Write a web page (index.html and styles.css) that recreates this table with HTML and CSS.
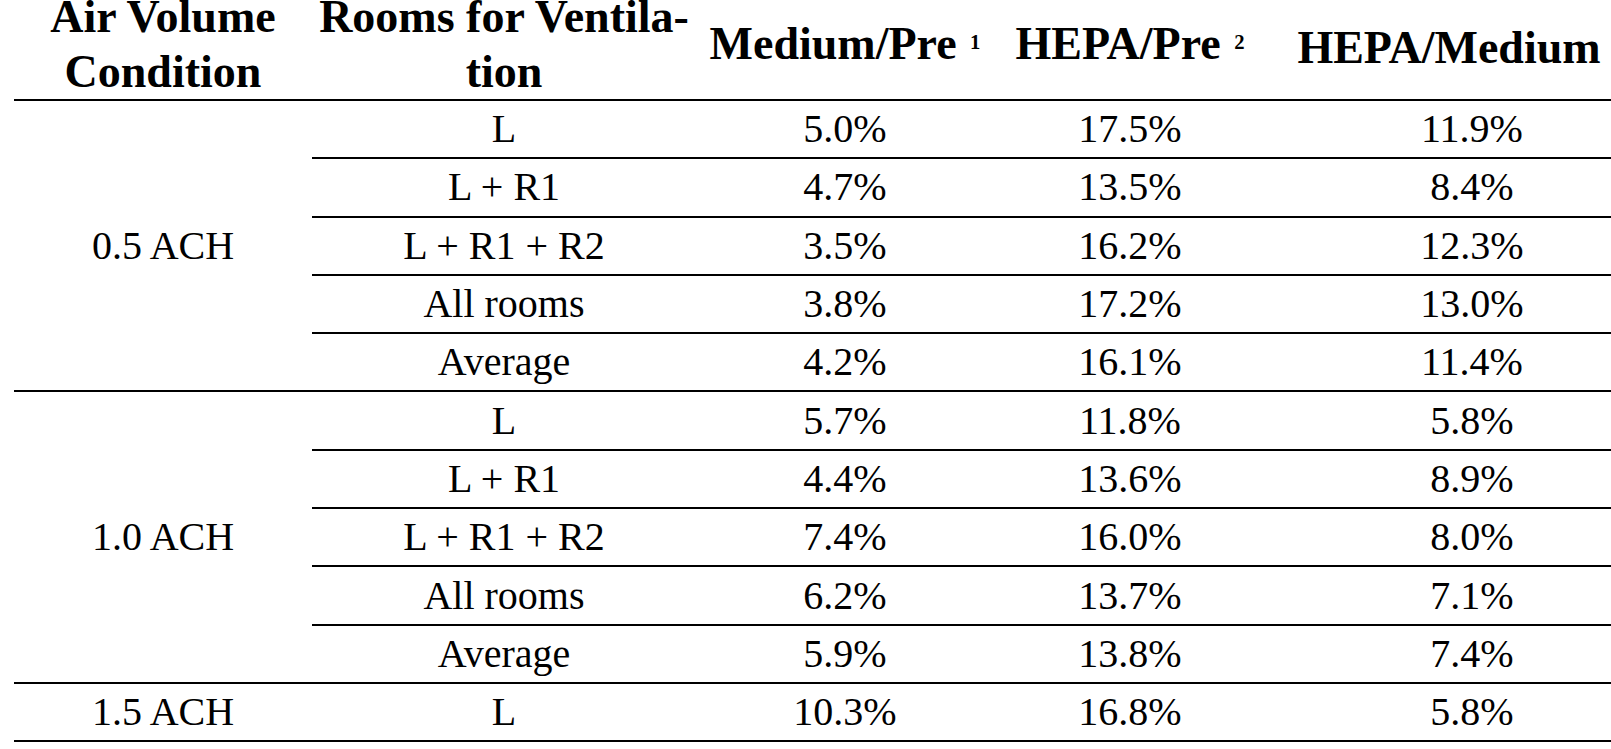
FILE: index.html
```html
<!DOCTYPE html>
<html lang="en">
<head>
<meta charset="utf-8">
<title>Air volume ratios</title>
<link rel="stylesheet" href="styles.css">
</head>
<body>
<table class="data">
  <colgroup>
    <col class="c1"><col class="c2"><col class="c3"><col class="c4"><col class="c5">
  </colgroup>
  <thead>
    <tr>
      <th>Air Volume<br>Condition</th>
      <th>Rooms for Ventila-<br>tion</th>
      <th class="single">Medium/Pre <sup>1</sup></th>
      <th class="single">HEPA/Pre <sup>2</sup></th>
      <th class="single last">HEPA/Medium</th>
    </tr>
  </thead>
  <tbody>
    <tr><td rowspan="5" class="group">0.5 ACH</td><td>L</td><td>5.0%</td><td>17.5%</td><td>11.9%</td></tr>
    <tr><td>L + R1</td><td>4.7%</td><td>13.5%</td><td>8.4%</td></tr>
    <tr><td>L + R1 + R2</td><td>3.5%</td><td>16.2%</td><td>12.3%</td></tr>
    <tr><td>All rooms</td><td>3.8%</td><td>17.2%</td><td>13.0%</td></tr>
    <tr><td>Average</td><td>4.2%</td><td>16.1%</td><td>11.4%</td></tr>
    <tr><td rowspan="5" class="group">1.0 ACH</td><td>L</td><td>5.7%</td><td>11.8%</td><td>5.8%</td></tr>
    <tr><td>L + R1</td><td>4.4%</td><td>13.6%</td><td>8.9%</td></tr>
    <tr><td>L + R1 + R2</td><td>7.4%</td><td>16.0%</td><td>8.0%</td></tr>
    <tr><td>All rooms</td><td>6.2%</td><td>13.7%</td><td>7.1%</td></tr>
    <tr><td>Average</td><td>5.9%</td><td>13.8%</td><td>7.4%</td></tr>
    <tr><td class="group">1.5 ACH</td><td>L</td><td>10.3%</td><td>16.8%</td><td>5.8%</td></tr>
  </tbody>
</table>
</body>
</html>
```
FILE: styles.css
```css
html, body {
  margin: 0;
  padding: 0;
  background: #ffffff;
  overflow: hidden;
}

.data {
  border-collapse: collapse;
  margin-top: -13px;
  margin-left: 14px;
  width: 1664px;
  table-layout: fixed;
  font-family: "Liberation Serif", "Times New Roman", serif;
  color: #000000;
}

.c1 { width: 298px; }
.c2 { width: 384px; }
.c3 { width: 298px; }
.c4 { width: 272px; }
.c5 { width: 412px; }

.data th {
  font-size: 46px;
  font-weight: bold;
  line-height: 54.5px;
  padding: 3px 0 0 0;
  text-align: center;
  vertical-align: middle;
  border-bottom: 2px solid #000000;
  white-space: nowrap;
}

.data th.single {
  padding-top: 10px;
}

.data th.last {
  padding-right: 46px;
}

.data sup {
  font-size: 0.45em;
  vertical-align: 0;
  position: relative;
  top: -0.45em;
  margin-left: 2px;
  font-weight: bold;
}

.data td {
  font-size: 40px;
  line-height: 56px;
  height: 56.3px;
  padding: 0;
  text-align: center;
  vertical-align: middle;
  border-bottom: 2px solid #000000;
  white-space: nowrap;
}
```
